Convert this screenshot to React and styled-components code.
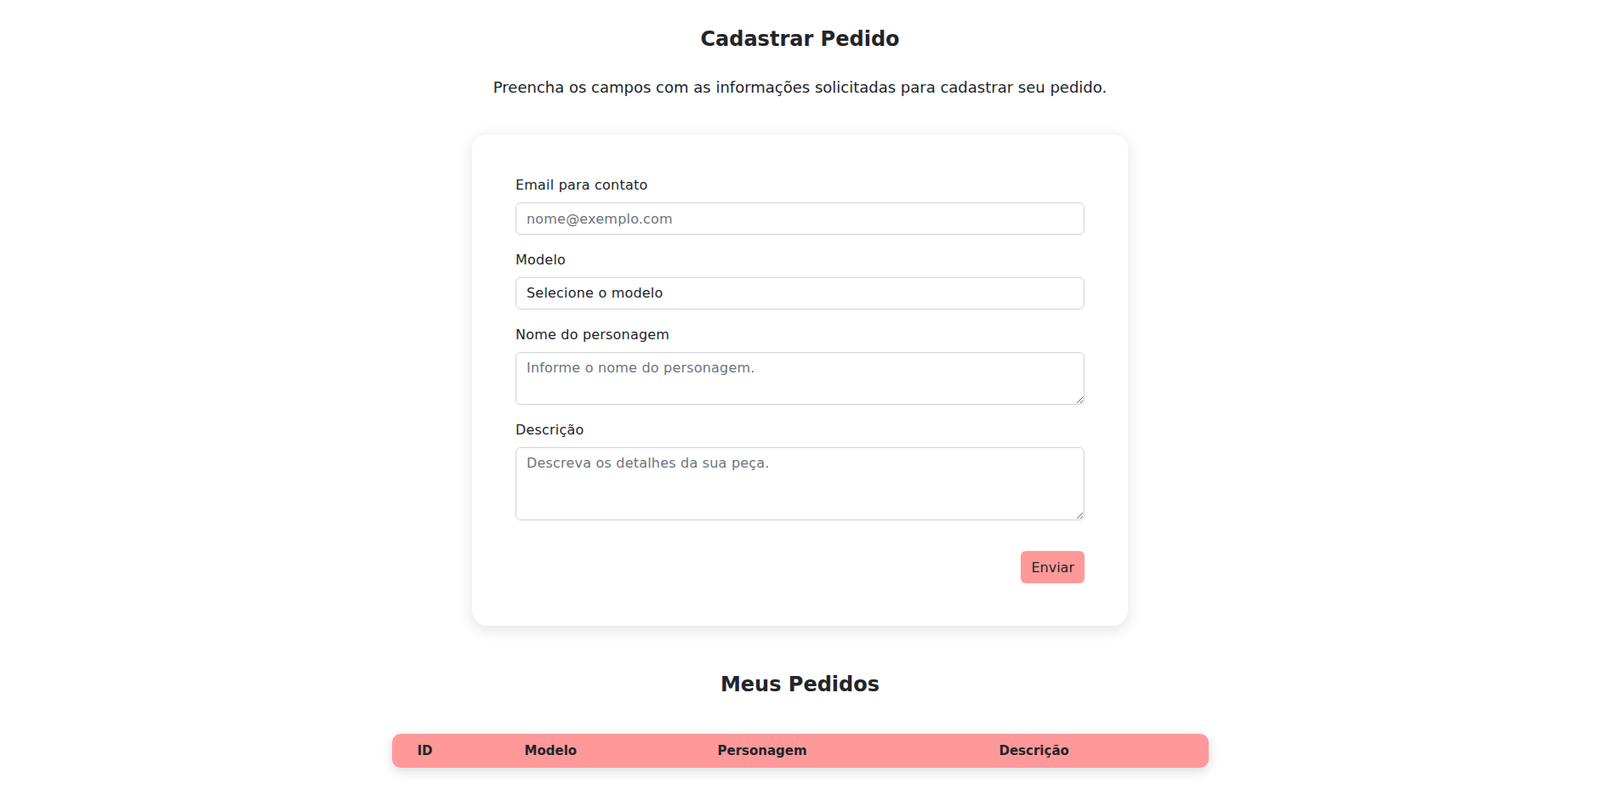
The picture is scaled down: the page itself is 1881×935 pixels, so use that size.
import React from 'react'
import styled, { createGlobalStyle } from 'styled-components'

const GlobalStyle = createGlobalStyle`
    body {
        margin: 0;
        background: #fff;
        color: #212529;
        font-family: "DejaVu Sans", "Noto Sans", sans-serif;
    }
    * {
        box-sizing: border-box;
    }
`

const Page = styled.main`
    display: flex;
    flex-direction: column;
    align-items: center;
    padding-bottom: 40px;
`

const Title = styled.h2`
    margin: ${props => props.$top}px 0 0;
    font-size: 24px;
    line-height: 30px;
    font-weight: 700;
    color: #212529;
`

const Subtitle = styled.p`
    margin: 30px 0 0;
    font-size: 18px;
    line-height: 24px;
`

const Card = styled.form`
    width: 771px;
    margin-top: 43px;
    padding: 48px 51px 50px 51px;
    background: #fff;
    border-radius: 18px;
    box-shadow: 0 4px 18px rgba(0, 0, 0, 0.12);
`

const Field = styled.div`
    margin-bottom: 18px;
`

const Label = styled.label`
    display: block;
    margin-bottom: 8px;
    font-size: 16px;
    line-height: 24px;
    letter-spacing: 0.2px;
    color: #212529;
`

const Input = styled.input`
    display: block;
    width: 100%;
    height: 38px;
    padding: 6px 12px;
    border: 1px solid #ced4da;
    border-radius: 6px;
    font-family: inherit;
    font-size: 16px;
    line-height: 24px;
    letter-spacing: 0.2px;
    color: #212529;
    background: #fff;

    &::placeholder {
        color: #6c757d;
    }
`

const Select = styled.select`
    display: block;
    width: 100%;
    height: 38px;
    padding: 6px 12px;
    border: 1px solid #ced4da;
    border-radius: 6px;
    font-family: inherit;
    font-size: 16px;
    line-height: 24px;
    letter-spacing: 0.2px;
    color: #212529;
    background: #fff;
    appearance: none;
`

const TextArea = styled.textarea`
    display: block;
    width: 100%;
    height: ${props => props.$height}px;
    padding: 6px 12px;
    border: 1px solid #ced4da;
    border-radius: 6px;
    font-family: inherit;
    font-size: 16px;
    line-height: 24px;
    letter-spacing: 0.2px;
    color: #212529;

    &::placeholder {
        color: #6c757d;
    }
`

const Actions = styled.div`
    display: flex;
    justify-content: flex-end;
    padding-top: 18px;
`

const Button = styled.button`
    height: 38px;
    padding: 0 12px;
    border: none;
    border-radius: 6px;
    background: #ff9999;
    color: #212529;
    font-family: inherit;
    font-size: 16px;
`

const TableWrap = styled.div`
    width: 960px;
    margin-top: 43px;
    border-radius: 10px;
    overflow: hidden;
    box-shadow: 0 4px 14px rgba(0, 0, 0, 0.15);
`

const Table = styled.table`
    width: 100%;
    border-collapse: collapse;
    table-layout: fixed;
`

const Th = styled.th`
    width: ${props => props.$w}px;
    height: 40px;
    padding: 0 0 0 30px;
    background: #ff9999;
    text-align: left;
    font-size: 15px;
    font-weight: 700;
    color: #212529;
`

const App = () => {
    return (
        <Page>
            <GlobalStyle />
            <Title $top={31}>Cadastrar Pedido</Title>
            <Subtitle>Preencha os campos com as informações solicitadas para cadastrar seu pedido.</Subtitle>
            <Card onSubmit={e => e.preventDefault()}>
                <Field>
                    <Label>Email para contato</Label>
                    <Input type="email" placeholder="nome@exemplo.com" />
                </Field>
                <Field>
                    <Label>Modelo</Label>
                    <Select defaultValue="">
                        <option value="">Selecione o modelo</option>
                    </Select>
                </Field>
                <Field>
                    <Label>Nome do personagem</Label>
                    <TextArea $height={62} placeholder="Informe o nome do personagem." />
                </Field>
                <Field>
                    <Label>Descrição</Label>
                    <TextArea $height={86} placeholder="Descreva os detalhes da sua peça." />
                </Field>
                <Actions>
                    <Button type="submit">Enviar</Button>
                </Actions>
            </Card>
            <Title $top={54}>Meus Pedidos</Title>
            <TableWrap>
                <Table>
                    <thead>
                        <tr>
                            <Th $w={126}>ID</Th>
                            <Th $w={227}>Modelo</Th>
                            <Th $w={331}>Personagem</Th>
                            <Th $w={276}>Descrição</Th>
                        </tr>
                    </thead>
                </Table>
            </TableWrap>
        </Page>
    )
}

export default App
